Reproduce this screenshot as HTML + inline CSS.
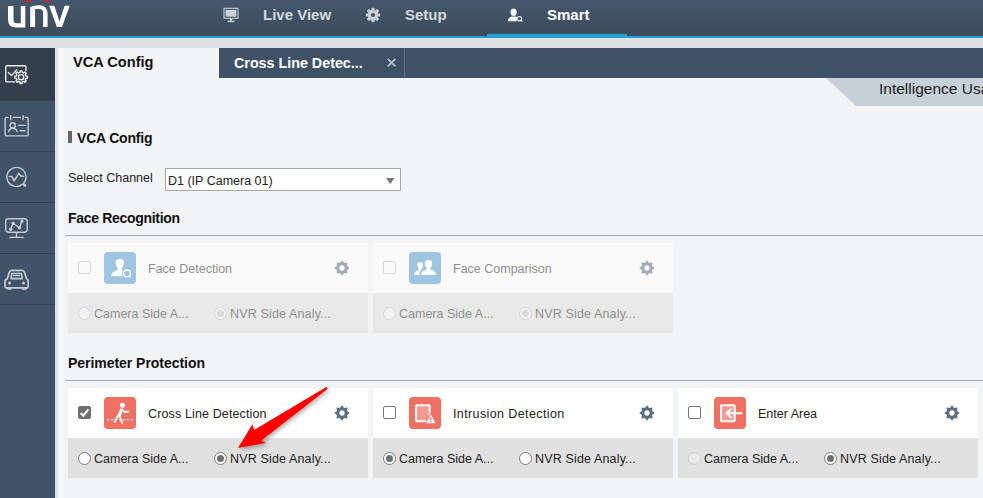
<!DOCTYPE html>
<html><head><meta charset="utf-8">
<style>
*{margin:0;padding:0;box-sizing:border-box}
html,body{width:983px;height:498px;overflow:hidden;background:#f3f4f6;font-family:"Liberation Sans",sans-serif;position:relative}
.a{position:absolute}
.t{position:absolute;white-space:nowrap;line-height:1}
#hdr{left:0;top:0;width:983px;height:36px;background:linear-gradient(#45576b,#3d4c5c)}
#bl{left:0;top:36px;width:983px;height:2px;background:#24a1d1}
#strip{left:0;top:38px;width:983px;height:10px;background:#dee2e6}
#side{left:0;top:48px;width:55px;height:450px;background:#405368}
#sgap{left:55px;top:48px;width:3px;height:450px;background:#dfe2e6}
.sdiv{position:absolute;left:0;width:55px;height:1px;background:#323f4e}
#tabbar{left:58px;top:48px;width:925px;height:30px;background:#3f5165}
#tab1{left:58px;top:48px;width:161px;height:30px;background:#f3f4f6}
.nav{font-weight:bold;font-size:15px;color:#d3d8de}
.hd{font-weight:bold;font-size:14px;color:#111}
.rg{font-size:12.5px;color:#222}
.card{position:absolute;width:300px;height:90px}
.ctop{position:absolute;left:0;top:0;width:300px;height:50px;background:#fff}
.cbot{position:absolute;left:0;top:50px;width:300px;height:40px;background:#e1e1e1}
.cb{position:absolute;left:10px;top:18px;width:13px;height:13px;border:1px solid #777;border-radius:2px;background:#fff}
.ico{position:absolute;left:36px;top:9px;width:32px;height:32px;border-radius:4px;background:#ef7163}
.cname{position:absolute;left:80px;top:20px;font-size:12.5px;line-height:1;white-space:nowrap;color:#222}
.gear{position:absolute;left:266.3px;top:17.3px;width:16px;height:16px;fill:#5b6f82}
.dis .gear{fill:#a2acb6}
.ico svg{display:block}
.r{position:absolute;top:63.5px;width:13px;height:13px;border-radius:50%;border:1px solid #7a7a7a;background:#fff}
.r.on::after{content:"";position:absolute;left:2px;top:2px;width:7px;height:7px;border-radius:50%;background:#6f6f6f}
.rt{position:absolute;top:65px;font-size:12.5px;line-height:1;white-space:nowrap;color:#222}
.dis .ctop{background:#fafafa}
.dis .cbot{background:#e9e9e9}
.dis .cname,.dis .rt{color:#8f8f8f}
.dis .cb{border-color:#d8d8d8;background:#fafafa}
.dis .r{border-color:#d5d5d5;background:#f3f3f3}
.dis .r.on::after{background:#d9d9d9}
.dis .ico{background:#a0c5e2}
</style></head><body>
<div id="hdr" class="a"></div>
<div id="bl" class="a"></div>
<div id="strip" class="a"></div>
<!-- Smart underline -->
<div class="a" style="left:487px;top:34px;width:140px;height:4px;background:#24a1d1"></div>

<!-- logo -->
<svg class="a" style="left:0;top:0" width="80" height="36" viewBox="0 0 80 36">
  <path d="M8 6.6 L8.8 5.9 H13.5 V19.8 Q13.5 23.3 16.8 23.3 H20.8 V5.9 H25.3 V27.6 H16.5 Q8 27.6 8 19.5 Z" fill="#fff"/>
  <path d="M30.2 27 V7.1 Q33.5 5.3 38.8 5.3 Q47.6 5.5 47.6 13.8 V27 H43.1 V13.3 Q43.1 9.1 39.4 9.1 H35.1 V27 Z" fill="#fff"/>
  <path d="M49.2 5.8 H54.3 L59.5 21.5 L64.6 5.8 H69.7 L62 27 H56.9 Z" fill="#fff"/>
  <path d="M25.2 2.5 Q37.8 -5.2 50.5 2.6" stroke="#f0141e" stroke-width="1.5" fill="none"/>
</svg>

<!-- nav -->
<svg class="a" style="left:223px;top:7px" width="16" height="16" viewBox="0 0 16 16">
  <rect x="1" y="1.3" width="14" height="10" fill="none" stroke="#c9ced4" stroke-width="1.1"/>
  <rect x="2.6" y="2.9" width="10.8" height="6.8" fill="#cdd2d8"/>
  <rect x="7" y="11.5" width="2" height="2.5" fill="#c9ced4"/><rect x="4.5" y="13.6" width="7" height="1.6" fill="#c9ced4"/>
</svg>
<div class="t nav" style="left:263px;top:7px">Live View</div>
<svg class="a" style="left:365px;top:7px" width="16" height="16" viewBox="-8 -8 16 16">
  <g fill="#c9ced4"><circle r="5.2"/>
  <g id="tth"><rect x="-1.6" y="-7.2" width="3.2" height="3" rx="0.6"/></g>
  <use href="#tth" transform="rotate(45)"/><use href="#tth" transform="rotate(90)"/><use href="#tth" transform="rotate(135)"/>
  <use href="#tth" transform="rotate(180)"/><use href="#tth" transform="rotate(225)"/><use href="#tth" transform="rotate(270)"/><use href="#tth" transform="rotate(315)"/>
  </g><circle r="2" fill="#41515f"/>
</svg>
<div class="t nav" style="left:405px;top:7px">Setup</div>
<svg class="a" style="left:507px;top:8px" width="16" height="14" viewBox="0 0 16 14">
  <ellipse cx="6.6" cy="4.2" rx="3.1" ry="3.7" fill="#f4f6f8"/>
  <path d="M1 13.3 C1.1 10.4 2.8 8.9 5 8.4 L8.2 8.4 C9.3 8.6 10.1 9 10.6 9.5 C9.6 10.3 9.3 11.8 9.9 13.3 Z" fill="#f4f6f8"/>
  <circle cx="12.4" cy="10.7" r="2.2" stroke="#f4f6f8" stroke-width="1.1" fill="none"/>
  <path d="M13.9 12.2 L15.3 13.6" stroke="#f4f6f8" stroke-width="1.2"/>
</svg>
<div class="t nav" style="left:547px;top:7px;color:#fff">Smart</div>

<!-- sidebar -->
<div id="side" class="a"></div>
<div class="a" style="left:0;top:48px;width:55px;height:53px;background:#333f4d"></div>
<div class="sdiv" style="top:151px"></div>
<div class="sdiv" style="top:202px"></div>
<div class="sdiv" style="top:253px"></div>
<div class="sdiv" style="top:304px"></div>
<!-- sidebar icons -->
<svg class="a" style="left:0;top:0" width="55" height="310" viewBox="0 0 55 310">
 <g fill="none" stroke="#eceef0" stroke-width="1.4" stroke-linecap="round" stroke-linejoin="round">
  <path d="M14.5 81.9 H7.2 Q5.7 81.9 5.7 80.4 V67.3 Q5.7 65.8 7.2 65.8 H24.5 Q26 65.8 26 67.3 V70.6"/>
  <path d="M8.4 72.5 L11.5 75.6 L16.8 69.8"/>
  <path d="M19.92 72.44 L20.20 70.86 L22.00 70.86 L22.28 72.44 L23.63 73.00 L24.94 72.08 L26.22 73.36 L25.30 74.67 L25.86 76.02 L27.44 76.30 L27.44 78.10 L25.86 78.38 L25.30 79.73 L26.22 81.04 L24.94 82.32 L23.63 81.40 L22.28 81.96 L22.00 83.54 L20.20 83.54 L19.92 81.96 L18.57 81.40 L17.26 82.32 L15.98 81.04 L16.90 79.73 L16.34 78.38 L14.76 78.10 L14.76 76.30 L16.34 76.02 L16.90 74.67 L15.98 73.36 L17.26 72.08 L18.57 73.00 Z"/>
  <circle cx="21.1" cy="77.2" r="2.6"/>
 </g>
 <g fill="none" stroke="#c6cbd1" stroke-width="1.4" stroke-linecap="round" stroke-linejoin="round">
  <path d="M8 117.4 H6.6 Q5.1 117.4 5.1 118.9 V134.4 Q5.1 135.9 6.6 135.9 H26.6 Q28.1 135.9 28.1 134.4 V118.9 Q28.1 117.4 26.6 117.4 H25.3"/>
  <path d="M13.3 117.4 H20.5"/>
  <path d="M10.7 115.6 V119.8 M23.1 115.6 V119.8"/>
  <circle cx="12.8" cy="125.4" r="2.6"/>
  <path d="M8.6 131.6 Q9.5 128.3 12.8 128.3 Q16.1 128.3 17 131.6"/>
  <path d="M18.6 125.4 H25.2 M20.2 130.8 H25"/>
  <path d="M22.30 184.39 A9.5 9.5 0 1 1 23.94 182.75"/>
  <path d="M23.6 184.1 L25 185.5" stroke-width="2.6"/>
  <path d="M9.5 176.5 H11.9 L14.1 180.9 L18.9 173.4 L20.8 175.9 L23.2 176.3" stroke-width="1.6"/>
  <rect x="5.7" y="218.8" width="21.5" height="13.4" rx="2.6"/>
  <path d="M16.5 233 V237 M9.8 237.4 H23.2"/>
  <path d="M10.7 229.3 L13.1 223.2 L19.5 227.8 L21.9 221.4"/>
  <path stroke-width="1.7" d="M5 286.7 V281.5 Q5 279.3 7.3 278.8 L9.2 272.4 Q9.8 270.4 12 270.4 H21.8 Q24 270.4 24.6 272.4 L26.5 278.8 Q28.1 279.3 28.1 281.5 V286.7 Q28.1 287.8 26.8 287.8 H6.3 Q5 287.8 5 286.7 Z"/>
  <path stroke-width="1.7" d="M7 287.8 L7.8 289 H10.6 L11.3 287.8 M22.2 287.8 L22.9 289 H25.7 L26.5 287.8"/>
  <path stroke-width="1.6" d="M11 278.6 L11.8 273.5 H21.4 L22.2 278.6 Z"/>
  <path d="M13.5 275.6 H19.6"/>
 </g>
 <g fill="#c6cbd1">
  <circle cx="10.7" cy="229.3" r="1.7"/><circle cx="13.1" cy="223.2" r="1.7"/><circle cx="19.5" cy="227.8" r="1.7"/><circle cx="21.9" cy="221.4" r="1.7"/>
  <circle cx="9.5" cy="283" r="1.5"/><circle cx="23.5" cy="283" r="1.5"/>
 </g>
</svg>
<div id="sgap" class="a"></div>

<!-- tabbar -->
<div id="tabbar" class="a"></div>
<div id="tab1" class="a"></div>
<div class="a" style="left:404px;top:48px;width:1px;height:30px;background:#5e6e80"></div>
<div class="t hd" style="left:73px;top:55px;font-size:14.6px">VCA Config</div>
<div class="t hd" style="left:234px;top:56px;font-size:14.3px;color:#fff">Cross Line Detec...</div>
<svg class="a" style="left:386px;top:57px" width="11" height="11" viewBox="0 0 11 11"><path d="M1.8 1.8 L9.4 9.4 M9.4 1.8 L1.8 9.4" stroke="#b6bcc2" stroke-width="1.8"/></svg>

<!-- intelligence -->
<svg class="a" style="left:826px;top:78px" width="157" height="28"><path d="M0 0 H157 V28 H30 Z" fill="#c6d1d9"/></svg>
<div class="t rg" style="left:879px;top:81px;font-size:15.5px;color:#222">Intelligence Usage</div>

<!-- VCA Config heading -->
<div class="a" style="left:68px;top:131px;width:4px;height:12px;background:#666"></div>
<div class="t hd" style="left:77px;top:131px;letter-spacing:-0.19px">VCA Config</div>
<div class="t rg" style="left:68px;top:172px">Select Channel</div>
<div class="a" style="left:165px;top:168px;width:236px;height:23px;border:1px solid #a8a8a8;background:#fff"></div>
<div class="t rg" style="left:168px;top:175px">D1 (IP Camera 01)</div>
<svg class="a" style="left:386px;top:178px" width="9" height="6"><path d="M0 0 H8.5 L4.25 6 Z" fill="#777"/></svg>

<div class="t hd" style="left:68px;top:211px;letter-spacing:-0.31px">Face Recognition</div>
<div class="a" style="left:65px;top:235px;width:918px;height:1px;background:#a9a9a9"></div>

<div class="t hd" style="left:68px;top:356px;letter-spacing:-0.04px">Perimeter Protection</div>
<div class="a" style="left:65px;top:380px;width:918px;height:1px;background:#a9a9a9"></div>

<!-- face cards -->
<div class="card dis" style="left:68px;top:243px">
  <div class="ctop"></div><div class="cbot"></div>
  <div class="cb"></div><div class="ico"><svg width="32" height="32" viewBox="0 0 32 32"><g fill="#fff">
<path d="M11.7 10.2 C11.7 8 12.6 7.4 14 7.2 L15.6 6.9 L17.6 7.3 C19.4 7.6 19.9 8.6 19.9 10.4 C19.9 13 19 15.3 17.6 16.2 L17.9 18.2 C19 18.5 19.9 18.9 20.6 19.3 C18.9 20.6 18.5 23 19.2 24.3 H7.1 C7.3 21 9.4 19 13.5 18.2 L13.8 16.2 C12.4 15.3 11.7 12.8 11.7 10.2 Z"/>
</g><circle cx="23" cy="21.4" r="4.9" fill="#a0c5e2"/><circle cx="23" cy="21.4" r="3.4" fill="none" stroke="#fff" stroke-width="1.35"/><path d="M25.4 23.8 L26.8 25.2" stroke="#fff" stroke-width="1.3"/></svg></div>
  <svg class="gear" width="16" height="16" viewBox="0 0 16 16"><path fill-rule="evenodd" d="M5.90 2.92 L7.76 0.50 L8.24 0.50 L10.10 2.92 L13.13 2.53 L13.47 2.87 L13.08 5.90 L15.50 7.76 L15.50 8.24 L13.08 10.10 L13.47 13.13 L13.13 13.47 L10.10 13.08 L8.24 15.50 L7.76 15.50 L5.90 13.08 L2.87 13.47 L2.53 13.13 L2.92 10.10 L0.50 8.24 L0.50 7.76 L2.92 5.90 L2.53 2.87 L2.87 2.53 Z M8 5.35 A2.65 2.65 0 1 0 8 10.65 A2.65 2.65 0 1 0 8 5.35 Z"/></svg><div class="cname">Face Detection</div>
  <div class="r" style="left:10px"></div><div class="rt" style="left:26px">Camera Side A...</div>
  <div class="r on" style="left:146px"></div><div class="rt" style="left:162px;letter-spacing:0.15px">NVR Side Analy...</div>
</div>
<div class="card dis" style="left:373px;top:243px">
  <div class="ctop"></div><div class="cbot"></div>
  <div class="cb"></div><div class="ico"><svg width="32" height="32" viewBox="0 0 32 32"><g fill="#fff">
<path d="M8.3 12.6 C8.3 11 9.2 10.4 10.6 10.3 L12 10.2 C13.4 10.4 14 11.2 14 12.6 C14 14.6 13.3 16.3 12.3 16.9 L12.6 17.9 L10.9 23.1 H5.1 C5.2 20.5 6.6 18.7 9.6 17.9 L9.9 16.9 C8.9 16.3 8.3 14.4 8.3 12.6 Z"/>
<path d="M15.9 10.6 C15.9 9 16.8 8.4 18.4 8.2 L19.9 8 C22 8.3 23.1 9 23.1 10.8 C23.1 13.6 22.3 15.9 21 16.6 L21.3 17.6 C24.9 18.3 27 20 27 23.1 H12.1 C12.2 20 14.2 18.3 17.7 17.6 L18 16.6 C16.7 15.9 15.9 13.4 15.9 10.6 Z"/>
</g><path d="M12.5 17.6 C11.6 18.9 10.9 20.8 10.9 23.1" stroke="#a0c5e2" stroke-width="1.2" fill="none"/></svg></div>
  <svg class="gear" width="16" height="16" viewBox="0 0 16 16"><path fill-rule="evenodd" d="M5.90 2.92 L7.76 0.50 L8.24 0.50 L10.10 2.92 L13.13 2.53 L13.47 2.87 L13.08 5.90 L15.50 7.76 L15.50 8.24 L13.08 10.10 L13.47 13.13 L13.13 13.47 L10.10 13.08 L8.24 15.50 L7.76 15.50 L5.90 13.08 L2.87 13.47 L2.53 13.13 L2.92 10.10 L0.50 8.24 L0.50 7.76 L2.92 5.90 L2.53 2.87 L2.87 2.53 Z M8 5.35 A2.65 2.65 0 1 0 8 10.65 A2.65 2.65 0 1 0 8 5.35 Z"/></svg><div class="cname">Face Comparison</div>
  <div class="r" style="left:10px"></div><div class="rt" style="left:26px">Camera Side A...</div>
  <div class="r on" style="left:146px"></div><div class="rt" style="left:162px;letter-spacing:0.15px">NVR Side Analy...</div>
</div>

<!-- perimeter cards -->
<div class="card" style="left:68px;top:388px">
  <div class="ctop"></div><div class="cbot"></div>
  <div class="cb" style="background:#6f6f6f;border-color:#6f6f6f"><svg width="13" height="13" viewBox="0 0 13 13" style="position:absolute;left:-1px;top:-1px"><path d="M2.6 6.9 L5.3 9.6 L10.4 3.4" stroke="#fff" stroke-width="2.1" fill="none"/></svg></div><div class="ico"><svg width="32" height="32" viewBox="0 0 32 32"><g fill="#fff"><circle cx="18.4" cy="8.3" r="2.5"/>
<path d="M16.3 11.7 Q17.6 11.2 19.3 12 L16.6 19.6 L13.2 18.8 Z"/></g>
<g stroke="#fff" fill="none" stroke-linecap="round" stroke-linejoin="round">
<path d="M18.6 13.3 L21.2 15.2 L24.6 14.4" stroke-width="1.7"/>
<path d="M13.8 19 L10.8 24.8" stroke-width="1.9"/>
<path d="M15.6 19.2 L16.7 22 L18.3 25.8" stroke-width="1.9"/>
<path d="M2.9 22.6 H29.5" stroke-width="1.2" stroke-dasharray="2.3 1.7" stroke-linecap="butt"/>
</g></svg></div>
  <svg class="gear" width="16" height="16" viewBox="0 0 16 16"><path fill-rule="evenodd" d="M5.90 2.92 L7.76 0.50 L8.24 0.50 L10.10 2.92 L13.13 2.53 L13.47 2.87 L13.08 5.90 L15.50 7.76 L15.50 8.24 L13.08 10.10 L13.47 13.13 L13.13 13.47 L10.10 13.08 L8.24 15.50 L7.76 15.50 L5.90 13.08 L2.87 13.47 L2.53 13.13 L2.92 10.10 L0.50 8.24 L0.50 7.76 L2.92 5.90 L2.53 2.87 L2.87 2.53 Z M8 5.35 A2.65 2.65 0 1 0 8 10.65 A2.65 2.65 0 1 0 8 5.35 Z"/></svg><div class="cname" style="letter-spacing:0.13px">Cross Line Detection</div>
  <div class="r" style="left:10px"></div><div class="rt" style="left:26px">Camera Side A...</div>
  <div class="r on" style="left:146px"></div><div class="rt" style="left:162px;letter-spacing:0.15px">NVR Side Analy...</div>
</div>
<div class="card" style="left:373px;top:388px">
  <div class="ctop"></div><div class="cbot"></div>
  <div class="cb"></div><div class="ico"><svg width="32" height="32" viewBox="0 0 32 32">
<rect x="7" y="8.2" width="13.7" height="16.1" rx="0.8" fill="#f39b91" stroke="#fff" stroke-width="2"/>
<path d="M21.8 15.2 L28.4 27.4 H15.2 Z" fill="#ef7163"/>
<path d="M21.8 17.3 L26.6 26.2 H17 Z" fill="#fff"/>
<path d="M21.8 20.2 V23.2" stroke="#ef7163" stroke-width="1.4"/><circle cx="21.8" cy="24.6" r="0.75" fill="#ef7163"/></svg></div>
  <svg class="gear" width="16" height="16" viewBox="0 0 16 16"><path fill-rule="evenodd" d="M5.90 2.92 L7.76 0.50 L8.24 0.50 L10.10 2.92 L13.13 2.53 L13.47 2.87 L13.08 5.90 L15.50 7.76 L15.50 8.24 L13.08 10.10 L13.47 13.13 L13.13 13.47 L10.10 13.08 L8.24 15.50 L7.76 15.50 L5.90 13.08 L2.87 13.47 L2.53 13.13 L2.92 10.10 L0.50 8.24 L0.50 7.76 L2.92 5.90 L2.53 2.87 L2.87 2.53 Z M8 5.35 A2.65 2.65 0 1 0 8 10.65 A2.65 2.65 0 1 0 8 5.35 Z"/></svg><div class="cname" style="letter-spacing:0.39px">Intrusion Detection</div>
  <div class="r on" style="left:10px"></div><div class="rt" style="left:26px">Camera Side A...</div>
  <div class="r" style="left:146px"></div><div class="rt" style="left:162px;letter-spacing:0.15px">NVR Side Analy...</div>
</div>
<div class="card" style="left:678px;top:388px">
  <div class="ctop"></div><div class="cbot"></div>
  <div class="cb"></div><div class="ico"><svg width="32" height="32" viewBox="0 0 32 32">
<rect x="7" y="8.2" width="13.7" height="16.1" rx="0.8" fill="#f39b91" stroke="#fff" stroke-width="2"/>
<g stroke="#fff" stroke-width="1.9" fill="none" stroke-linecap="round" stroke-linejoin="round"><path d="M27.6 16.2 H12.8"/><path d="M17 12 L12.6 16.2 L17 20.4"/></g></svg></div>
  <svg class="gear" width="16" height="16" viewBox="0 0 16 16"><path fill-rule="evenodd" d="M5.90 2.92 L7.76 0.50 L8.24 0.50 L10.10 2.92 L13.13 2.53 L13.47 2.87 L13.08 5.90 L15.50 7.76 L15.50 8.24 L13.08 10.10 L13.47 13.13 L13.13 13.47 L10.10 13.08 L8.24 15.50 L7.76 15.50 L5.90 13.08 L2.87 13.47 L2.53 13.13 L2.92 10.10 L0.50 8.24 L0.50 7.76 L2.92 5.90 L2.53 2.87 L2.87 2.53 Z M8 5.35 A2.65 2.65 0 1 0 8 10.65 A2.65 2.65 0 1 0 8 5.35 Z"/></svg><div class="cname">Enter Area</div>
  <div class="r" style="left:10px;background:#ebebeb;border-color:#cfcfcf"></div><div class="rt" style="left:26px">Camera Side A...</div>
  <div class="r on" style="left:146px"></div><div class="rt" style="left:162px;letter-spacing:0.15px">NVR Side Analy...</div>
</div>

<!-- red arrow -->
<svg class="a" style="left:0;top:0" width="983" height="498" viewBox="0 0 983 498">
<defs><filter id="sh" x="-20%" y="-20%" width="140%" height="140%"><feDropShadow dx="1.5" dy="2" stdDeviation="2.3" flood-color="#000" flood-opacity="0.33"/></filter></defs>
<path d="M325.5 387.4 L254.1 429.9 L252.5 424.2 L238 448 L265.8 443.1 L261.4 440.6 L326.9 389.4 A1.2 1.2 0 0 0 325.5 387.4 Z" fill="#ff0000" filter="url(#sh)"/>
</svg>
</body></html>
